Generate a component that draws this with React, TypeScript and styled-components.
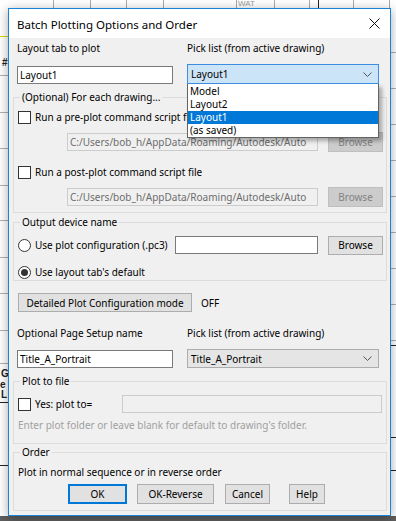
import styled, { createGlobalStyle } from 'styled-components'

const GlobalStyle = createGlobalStyle`
  html, body {
    margin: 0;
    padding: 0;
  }
  body {
    background: #ffffff;
    font-family: 'Noto Sans', 'Open Sans', sans-serif;
  }
`

const Screen = styled.div`
  position: relative;
  width: 396px;
  height: 521px;
  overflow: hidden;
  padding: 8px 0 0 8px;
  box-sizing: border-box;
`

const Backdrop = styled.svg`
  position: absolute;
  left: 0;
  top: 0;
`

const Dialog = styled.div`
  position: relative;
  width: 383px;
  height: 508px;
  box-sizing: border-box;
  border: 1px solid #1883d7;
  background: #f0f0f0;
  box-shadow: 0 2px 10px rgba(0, 0, 0, 0.35);
  display: flex;
  flex-direction: column;
  font-size: 10px;
  color: #000;
`

const TitleBar = styled.div`
  height: 29px;
  flex: none;
  background: #ffffff;
  display: flex;
  align-items: center;
  justify-content: space-between;
  padding: 0 10px 0 8px;
`

const Title = styled.span`
  font-size: 11.5px;
  margin-top: 1px;
`

const Body = styled.div`
  display: flex;
  flex-direction: column;
  padding: 0 3px 0 4px;
`

const Pair = styled.div<{ $top: number; $h: number }>`
  display: grid;
  grid-template-columns: 156px 192px;
  column-gap: 14px;
  align-items: end;
  height: ${p => p.$h}px;
  margin-top: ${p => p.$top}px;
  padding-left: 4px;
`

const Label = styled.div`
  line-height: 15px;
  white-space: nowrap;
`

const TextBox = styled.input<{ $w?: number }>`
  box-sizing: border-box;
  width: ${p => (p.$w ? `${p.$w}px` : '100%')};
  height: 18px;
  margin: 0;
  padding: 0 2px;
  border: 1px solid #7a7a7a;
  background: #ffffff;
  font: inherit;
  color: #000;
  outline: none;

  &:disabled {
    border-color: #cccccc;
    background: #f0f0f0;
    color: #6d6d6d;
  }
`

const SelectWrap = styled.div`
  position: relative;
`

const SelectBox = styled.div<{ $focused?: boolean }>`
  box-sizing: border-box;
  height: ${p => (p.$focused ? 20 : 19)}px;
  display: flex;
  align-items: center;
  justify-content: space-between;
  padding: 0 6px 0 3px;
  border: 1px solid ${p => (p.$focused ? '#3d8ee0' : '#acacac')};
  background: ${p => (p.$focused ? '#cce4f7' : '#e5e5e5')};
`

const DropList = styled.div`
  position: absolute;
  left: 0;
  top: 100%;
  width: 100%;
  box-sizing: border-box;
  padding-top: 1px;
  border: 1px solid #646464;
  border-top: none;
  background: #ffffff;
  box-shadow: 3px 3px 4px rgba(0, 0, 0, 0.3);
  z-index: 2;
`

const DropItem = styled.div<{ $active?: boolean }>`
  height: 13px;
  line-height: 13px;
  padding-left: 2px;
  background: ${p => (p.$active ? '#0078d7' : 'transparent')};
  color: ${p => (p.$active ? '#ffffff' : '#000000')};
`

const Group = styled.fieldset<{ $top: number; $bottom: number }>`
  margin: ${p => p.$top}px 0 0 0;
  padding: 0 0 ${p => p.$bottom}px 0;
  border: 1px solid #dcdcdc;
  min-width: 0;
`

const Legend = styled.legend`
  margin-left: 6px;
  padding: 0 2px;
  line-height: 14px;
  font-size: 10px;
`

const Row = styled.div<{ $top: number; $h: number; $left?: number }>`
  display: flex;
  align-items: center;
  height: ${p => p.$h}px;
  margin-top: ${p => p.$top}px;
  padding-left: ${p => p.$left ?? 4}px;
  white-space: nowrap;
`

const Check = styled.span`
  box-sizing: border-box;
  flex: none;
  width: 13px;
  height: 13px;
  border: 1px solid #333333;
  background: #ffffff;
`

const Radio = styled.span<{ $on?: boolean }>`
  box-sizing: border-box;
  flex: none;
  width: 13px;
  height: 13px;
  border-radius: 50%;
  border: 1px solid #333333;
  background: #ffffff;
  display: flex;
  align-items: center;
  justify-content: center;

  &::after {
    content: '';
    width: 7px;
    height: 7px;
    border-radius: 50%;
    background: ${p => (p.$on ? '#333333' : 'transparent')};
  }
`

const OptionText = styled.span`
  margin-left: 4px;
`

const Hint = styled.span`
  color: #a0a0a0;
`

const Button = styled.button<{ $w: number; $h?: number; $gap?: number; $primary?: boolean }>`
  box-sizing: border-box;
  flex: none;
  width: ${p => p.$w}px;
  height: ${p => p.$h ?? 20}px;
  margin: 0 0 0 ${p => p.$gap ?? 0}px;
  padding: 0;
  font: inherit;
  color: #000;
  background: #e1e1e1;
  border: ${p => (p.$primary ? '2px solid #0078d7' : '1px solid #adadad')};
  white-space: nowrap;

  &:disabled {
    background: #cccccc;
    border-color: #bfbfbf;
    color: #838383;
  }
`

const Spacer = styled.span<{ $w?: number }>`
  flex: ${p => (p.$w ? `0 0 ${p.$w}px` : '1')};
`

const Off = styled.span`
  margin-left: 9px;
`

function Chevron() {
  return (
    <svg width="9" height="5" viewBox="0 0 9 5">
      <path d="M0.5 0.5 L4.5 4.5 L8.5 0.5" fill="none" stroke="#555" strokeWidth="1" />
    </svg>
  )
}

function CloseIcon() {
  return (
    <svg width="11" height="11" viewBox="0 0 11 11">
      <path d="M0.5 0.5 L10.5 10.5 M10.5 0.5 L0.5 10.5" stroke="#111" strokeWidth="1" />
    </svg>
  )
}

const gridYs = [75, 112, 148, 185, 220, 257, 293, 330, 363]
const topXs = [53, 90, 126, 163, 236, 274, 309, 353, 389]

function Drawing() {
  return (
    <Backdrop width="396" height="521" viewBox="0 0 396 521">
      <rect width="396" height="521" fill="#ffffff" />
      {topXs.map(x => (
        <line key={x} x1={x + 0.5} y1="0" x2={x + 0.5} y2="10" stroke="#a8a8a8" />
      ))}
      <line x1="318.5" y1="0" x2="318.5" y2="10" stroke="#222" />
      <text x="238" y="6" fontSize="8" fill="#999" fontFamily="Liberation Sans, sans-serif">WAT</text>
      <line x1="0" y1="36.5" x2="10" y2="36.5" stroke="#d8d800" />
      <text x="2" y="66" fontSize="10" fontWeight="bold" fill="#222" fontFamily="Liberation Sans, sans-serif">#</text>
      {gridYs.map(y => (
        <line key={y} x1="0" y1={y + 0.5} x2="10" y2={y + 0.5} stroke="#b0b0b0" />
      ))}
      <text x="1" y="377" fontSize="10" fontWeight="bold" fill="#222" fontFamily="Liberation Sans, sans-serif">G</text>
      <text x="0" y="388" fontSize="10" fontWeight="bold" fill="#222" fontFamily="Liberation Sans, sans-serif">e</text>
      <text x="1" y="398" fontSize="10" fontWeight="bold" fill="#222" fontFamily="Liberation Sans, sans-serif">L</text>
      <line x1="0" y1="402.5" x2="10" y2="402.5" stroke="#222" />
      <line x1="0" y1="465.5" x2="10" y2="465.5" stroke="#222" />
      {[52, 88, 124, 160, 196, 232, 268, 304, 340].map(y => (
        <line key={`r${y}`} x1="386" y1={y + 0.5} x2="396" y2={y + 0.5} stroke="#b0b0b0" />
      ))}
      <line x1="386" y1="345.5" x2="396" y2="345.5" stroke="#222" />
      <line x1="386" y1="437.5" x2="396" y2="437.5" stroke="#222" />
      <line x1="386" y1="470.5" x2="396" y2="470.5" stroke="#222" />
      <rect x="0" y="516" width="396" height="5" fill="#5e5e5e" />
    </Backdrop>
  )
}

export default function App() {
  return (
    <Screen>
      <GlobalStyle />
      <Drawing />
      <Dialog>
        <TitleBar>
          <Title>Batch Plotting Options and Order</Title>
          <CloseIcon />
        </TitleBar>
        <Body>
          <Pair $top={3} $h={15}>
            <Label>Layout tab to plot</Label>
            <Label>Pick list (from active drawing)</Label>
          </Pair>
          <Pair $top={8} $h={20}>
            <TextBox readOnly defaultValue="Layout1" />
            <SelectWrap>
              <SelectBox $focused>
                <span>Layout1</span>
                <Chevron />
              </SelectBox>
              <DropList>
                <DropItem>Model</DropItem>
                <DropItem>Layout2</DropItem>
                <DropItem $active>Layout1</DropItem>
                <DropItem>(as saved)</DropItem>
              </DropList>
            </SelectWrap>
          </Pair>

          <Group $top={6} $bottom={5}>
            <Legend>(Optional) For each drawing...</Legend>
            <Row $top={6} $h={14}>
              <Check />
              <OptionText>Run a pre-plot command script file</OptionText>
            </Row>
            <Row $top={8} $h={20} $left={53}>
              <TextBox $w={251} disabled defaultValue="C:/Users/bob_h/AppData/Roaming/Autodesk/Auto" />
              <Button $w={55} $gap={10} disabled>Browse</Button>
            </Row>
            <Row $top={13} $h={14}>
              <Check />
              <OptionText>Run a post-plot command script file</OptionText>
            </Row>
            <Row $top={8} $h={20} $left={53}>
              <TextBox $w={251} disabled defaultValue="C:/Users/bob_h/AppData/Roaming/Autodesk/Auto" />
              <Button $w={55} $gap={10} disabled>Browse</Button>
            </Row>
          </Group>

          <Group $top={2} $bottom={1}>
            <Legend>Output device name</Legend>
            <Row $top={6} $h={20}>
              <Radio />
              <OptionText>Use plot configuration (.pc3)</OptionText>
              <Spacer />
              <TextBox $w={143} readOnly />
              <Button $w={55} $h={19} $gap={10}>Browse</Button>
              <Spacer $w={3} />
            </Row>
            <Row $top={10} $h={14}>
              <Radio $on />
              <OptionText>Use layout tab&apos;s default</OptionText>
            </Row>
          </Group>

          <Row $top={12} $h={19} $left={5}>
            <Button $w={174} $h={19}>Detailed Plot Configuration mode</Button>
            <Off>OFF</Off>
          </Row>

          <Pair $top={14} $h={15}>
            <Label>Optional Page Setup name</Label>
            <Label>Pick list (from active drawing)</Label>
          </Pair>
          <Pair $top={8} $h={19}>
            <TextBox readOnly defaultValue="Title_A_Portrait" />
            <SelectBox>
              <span>Title_A_Portrait</span>
              <Chevron />
            </SelectBox>
          </Pair>

          <Group $top={6} $bottom={11}>
            <Legend>Plot to file</Legend>
            <Row $top={7} $h={18}>
              <Check />
              <OptionText>Yes: plot to=</OptionText>
              <Spacer />
              <TextBox $w={260} disabled />
              <Spacer $w={4} />
            </Row>
            <Row $top={5} $h={14}>
              <Hint>Enter plot folder or leave blank for default to drawing&apos;s folder.</Hint>
            </Row>
          </Group>

          <Group $top={1} $bottom={6}>
            <Legend>Order</Legend>
            <Row $top={6} $h={14}>
              <span>Plot in normal sequence or in reverse order</span>
            </Row>
            <Row $top={5} $h={20} $left={54}>
              <Button $w={59} $primary>OK</Button>
              <Button $w={77} $gap={10}>OK-Reverse</Button>
              <Button $w={45} $gap={11}>Cancel</Button>
              <Button $w={36} $gap={19}>Help</Button>
            </Row>
          </Group>
        </Body>
      </Dialog>
    </Screen>
  )
}
